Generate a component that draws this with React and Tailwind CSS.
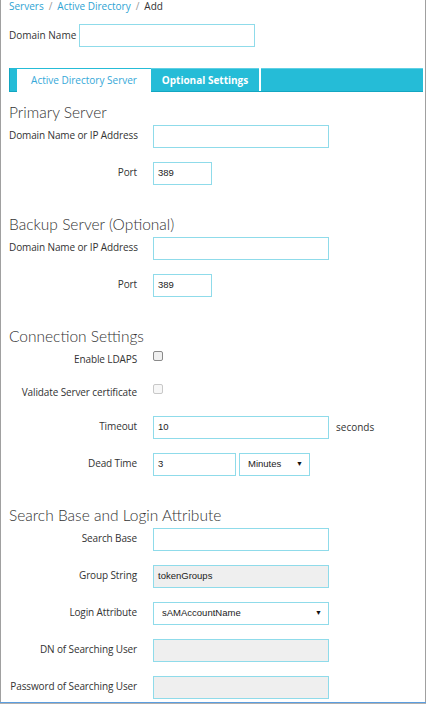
import React from "react";

const labelCls = "w-[128px] shrink-0 text-right text-[10px] leading-[20px] text-[#333] whitespace-nowrap tracking-[-0.12px]";
const inputBase = "h-[23px] border border-[#8fdbea] px-[4px] text-[9.5px] text-[#222] flex items-center";
const sansIn = { fontFamily: '"Liberation Sans", Arial, sans-serif' };

function Row({ label, children, mb = "mb-[14px]" }) {
  return (
    <div className={`flex items-start h-[23px] ${mb}`}>
      <div className={labelCls}>{label}</div>
      <div className="ml-[16px] flex items-start">{children}</div>
    </div>
  );
}

function Input({ w, value = "", gray = false }) {
  return (
    <div className={`${inputBase} ${w} ${gray ? "bg-[#efefef]" : "bg-white"}`} style={sansIn}>
      {value}
    </div>
  );
}

function Select({ w, value }) {
  return (
    <div className={`${inputBase} ${w} bg-white justify-between pl-[8px] pr-[6px]`} style={sansIn}>
      <span>{value}</span>
      <span className="text-[7px] text-[#111]">▼</span>
    </div>
  );
}

function Heading({ children, mt = "mt-[29px]" }) {
  return (
    <div
      className={`${mt} mb-[3px] h-[20px] leading-[20px] text-[15.5px] text-[#333] font-light whitespace-nowrap`}
      style={{ fontFamily: 'Lato, "Open Sans", sans-serif' }}
    >
      {children}
    </div>
  );
}

function CheckRow({ label, disabled, h }) {
  return (
    <div className={`flex items-start ${h} mb-[14px]`}>
      <div className={labelCls}>{label}</div>
      <div className="ml-[16px] pt-[2px]">
        <div
          className={`w-[10px] h-[10px] rounded-[2px] border ${
            disabled ? "border-[#c8c8c8] bg-[#f7f7f7]" : "border-[#8a8a8a] bg-[#f0f0f0]"
          }`}
        />
      </div>
    </div>
  );
}

export default function App() {
  return (
    <div
      className="w-[427px] h-[704px] overflow-hidden bg-white relative"
      style={{ fontFamily: '"Open Sans", sans-serif' }}
    >
      <div className="w-[426px] h-[702px] border-l border-r border-[#a0a0a0] pl-[8px] pr-[1px]">
        {/* breadcrumb */}
        <div className="h-[12px] leading-[12px] text-[10px] text-[#333] whitespace-nowrap">
          <span className="text-[#2ea3d3]">Servers</span>
          <span className="text-[#999] mx-[5px]">/</span>
          <span className="text-[#2ea3d3]">Active Directory</span>
          <span className="text-[#999] mx-[5px]">/</span>
          <span>Add</span>
        </div>
        {/* domain name */}
        <div className="mt-[12px] flex items-start h-[23px]">
          <div className="text-[10px] leading-[22px] text-[#333] w-[70px] whitespace-nowrap">Domain Name</div>
          <div className="w-[176px] h-[23px] border border-[#8fdbea] bg-white" />
        </div>
        {/* tabs */}
        <div className="mt-[21px] mr-[1px] flex h-[24px]">
          <div className="w-[8px] bg-[#25bcd7] border-l border-b border-[#13a6c1]" />
          <div className="w-[134px] bg-white border-t border-[#25bcd7] flex items-center justify-center text-[10px] text-[#35a8d8] whitespace-nowrap">
            Active Directory Server
          </div>
          <div className="w-[108px] bg-[#25bcd7] border-t border-b border-[#13a6c1] border-t-[#5fd0e4] flex items-center justify-center text-[10px] font-bold text-white whitespace-nowrap">
            Optional Settings
          </div>
          <div className="w-[2px] bg-white border-b border-[#13a6c1]" />
          <div className="flex-1 bg-[#25bcd7] border-t border-b border-[#13a6c1] border-t-[#5fd0e4]" />
        </div>

        <Heading mt="mt-[10px]">Primary Server</Heading>
        <Row label="Domain Name or IP Address"><Input w="w-[176px]" /></Row>
        <Row label="Port"><Input w="w-[59px]" value="389" /></Row>

        <Heading>Backup Server (Optional)</Heading>
        <Row label="Domain Name or IP Address"><Input w="w-[176px]" /></Row>
        <Row label="Port"><Input w="w-[59px]" value="389" /></Row>

        <Heading>Connection Settings</Heading>
        <CheckRow label="Enable LDAPS" h="h-[19px]" />
        <CheckRow label="Validate Server certificate" disabled h="h-[20px]" />
        <Row label="Timeout">
          <Input w="w-[176px]" value="10" />
          <span className="ml-[7px] text-[10px] leading-[23px] text-[#333]">seconds</span>
        </Row>
        <Row label="Dead Time">
          <Input w="w-[83px]" value="3" />
          <div className="ml-[3px]"><Select w="w-[71px]" value="Minutes" /></div>
        </Row>

        <Heading>Search Base and Login Attribute</Heading>
        <Row label="Search Base"><Input w="w-[176px]" /></Row>
        <Row label="Group String"><Input w="w-[176px]" value="tokenGroups" gray /></Row>
        <Row label="Login Attribute"><Select w="w-[176px]" value="sAMAccountName" /></Row>
        <Row label="DN of Searching User"><Input w="w-[176px]" gray /></Row>
        <Row label="Password of Searching User"><Input w="w-[176px]" gray /></Row>
      </div>
      <div className="h-[1px] w-[426px] bg-[#5b9ee0]" />
      <div className="h-[1px] w-[426px] bg-[#b0b0b0]" />
    </div>
  );
}
